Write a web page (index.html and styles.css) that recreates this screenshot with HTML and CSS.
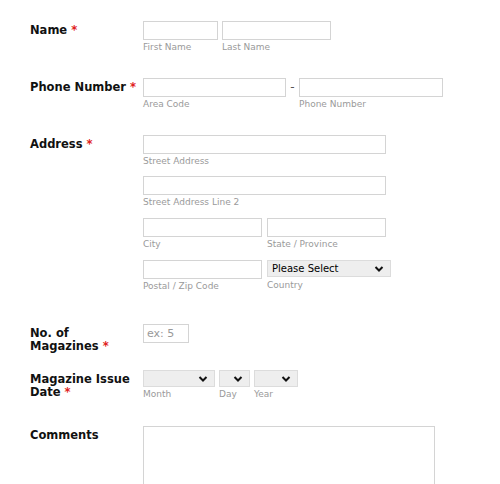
FILE: index.html
```html
<!DOCTYPE html>
<html lang="en">
<head>
	<meta charset="UTF-8">
	<meta name="viewport" content="width=device-width, initial-scale=1.0">
	<title>Magazine Subscription</title>
	<link rel="stylesheet" href="styles.css">
</head>
<body>

	<form class="form">

		<div class="row row-name">
			<label class="label">Name <span class="req">*</span></label>
			<div class="fields">
				<div class="field">
					<input type="text" class="input w-first">
					<span class="sub">First Name</span>
				</div>
				<div class="field">
					<input type="text" class="input w-last">
					<span class="sub">Last Name</span>
				</div>
			</div>
		</div>

		<div class="row row-phone">
			<label class="label">Phone Number <span class="req">*</span></label>
			<div class="fields">
				<div class="field">
					<input type="text" class="input w-area">
					<span class="sub">Area Code</span>
				</div>
				<span class="dash">-</span>
				<div class="field">
					<input type="text" class="input w-phone">
					<span class="sub">Phone Number</span>
				</div>
			</div>
		</div>

		<div class="row row-address">
			<label class="label">Address <span class="req">*</span></label>
			<div class="stack">
				<div class="field">
					<input type="text" class="input w-street">
					<span class="sub">Street Address</span>
				</div>
				<div class="field">
					<input type="text" class="input w-street">
					<span class="sub">Street Address Line 2</span>
				</div>
				<div class="fields split">
					<div class="field">
						<input type="text" class="input w-half">
						<span class="sub">City</span>
					</div>
					<div class="field">
						<input type="text" class="input w-half">
						<span class="sub">State / Province</span>
					</div>
				</div>
				<div class="fields split">
					<div class="field">
						<input type="text" class="input w-half">
						<span class="sub">Postal / Zip Code</span>
					</div>
					<div class="field">
						<select class="select w-country">
							<option>Please Select</option>
						</select>
						<span class="sub sub-country">Country</span>
					</div>
				</div>
			</div>
		</div>

		<div class="row row-count">
			<label class="label">No. of<br>Magazines <span class="req">*</span></label>
			<div class="fields">
				<input type="text" class="input input-count w-count" placeholder="ex: 5">
			</div>
		</div>

		<div class="row row-date">
			<label class="label">Magazine Issue Date <span class="req">*</span></label>
			<div class="fields">
				<div class="field">
					<select class="select w-month"><option></option></select>
					<span class="sub">Month</span>
				</div>
				<div class="field">
					<select class="select w-day"><option></option></select>
					<span class="sub">Day</span>
				</div>
				<div class="field">
					<select class="select w-year"><option></option></select>
					<span class="sub">Year</span>
				</div>
			</div>
		</div>

		<div class="row row-comments">
			<label class="label">Comments</label>
			<textarea class="textarea"></textarea>
		</div>

	</form>

</body>
</html>
```

FILE: styles.css
```css
body {
	margin: 0;
	font-family: Verdana, 'DejaVu Sans', sans-serif;
	color: #000;
	background-color: #fff;
}
.form {
	padding: 21px 0 0 30px;
}
.row {
	display: flex;
	align-items: flex-start;
}
.label {
	width: 112px;
	margin-right: 1px;
	padding-top: 3px;
	font-size: 11.5px;
	font-weight: bold;
	line-height: 13px;
	color: #111;
}
.req {
	color: #e02020;
}
.fields {
	display: flex;
	align-items: flex-start;
	gap: 4px;
}
.fields.split {
	gap: 5px;
}
.stack {
	display: flex;
	flex-direction: column;
	gap: 9px;
}
.stack .split {
	margin-top: 1px;
}
.field {
	display: flex;
	flex-direction: column;
}
.input {
	box-sizing: border-box;
	height: 19px;
	margin: 0;
	padding: 1px 4px;
	border: 1px solid #d4d4d4;
	border-radius: 0;
	background-color: #fff;
	font-family: Verdana, 'DejaVu Sans', sans-serif;
	font-size: 12px;
	outline: none;
}
.input-count {
	font-size: 11px;
	padding: 1px 3px;
}
.input::placeholder {
	color: #999;
}
.select {
	box-sizing: border-box;
	height: 17px;
	margin: 0;
	padding: 0 18px 0 4px;
	border: 1px solid #dcdcdc;
	border-radius: 0;
	-webkit-appearance: none;
	appearance: none;
	background-color: #eeeeee;
	background-image: url("data:image/svg+xml;utf8,<svg xmlns='http://www.w3.org/2000/svg' width='10' height='6' viewBox='0 0 10 6'><path d='M1.5 1 L5 4.5 L8.5 1' fill='none' stroke='%23111' stroke-width='2'/></svg>");
	background-repeat: no-repeat;
	background-position: right 6px center;
	font-family: Verdana, 'DejaVu Sans', sans-serif;
	font-size: 10px;
	line-height: 15px;
	color: #000;
}
.sub {
	margin-top: 2px;
	font-size: 9px;
	line-height: 11px;
	color: #9a9a9a;
}
.sub-country {
	margin-top: 3px;
}
.dash {
	width: 5px;
	text-align: center;
	font-size: 12px;
	line-height: 19px;
	color: #555;
}
.w-first { width: 75px; }
.w-last { width: 109px; }
.w-area { width: 143px; }
.w-phone { width: 144px; }
.w-street { width: 243px; }
.w-half { width: 119px; }
.w-country { width: 124px; }
.w-count { width: 46px; }
.w-month { width: 72px; }
.w-day { width: 31px; }
.w-year { width: 44px; }
.row-name { margin-bottom: 25px; }
.row-phone { margin-bottom: 25px; }
.row-address { margin-bottom: 32px; }
.row-count { margin-bottom: 17px; }
.row-date { margin-bottom: 26px; }
.textarea {
	box-sizing: border-box;
	width: 292px;
	height: 120px;
	margin: 0;
	border: 1px solid #d4d4d4;
	border-radius: 0;
	resize: none;
}
```
